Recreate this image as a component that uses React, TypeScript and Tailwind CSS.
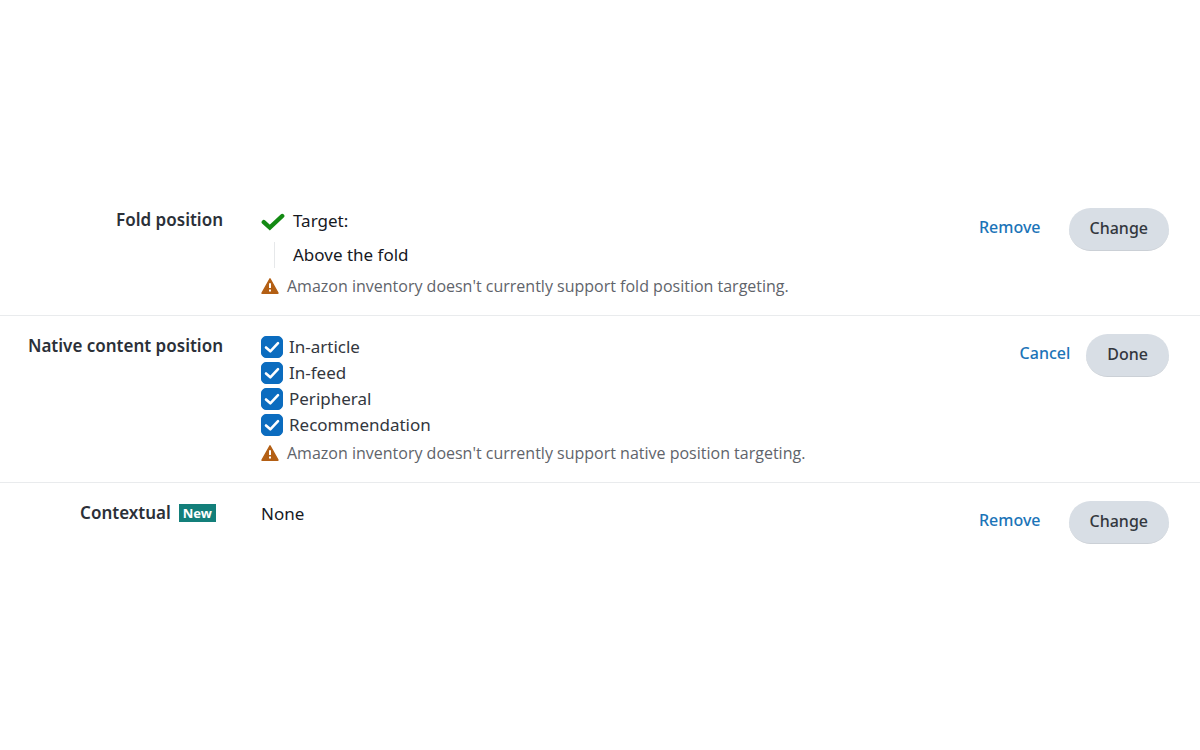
import React, { useState } from 'react';

const POSITIONS = ['In-article', 'In-feed', 'Peripheral', 'Recommendation'];

const CheckMark: React.FC = () => (
  <svg className="w-6 h-6 shrink-0" viewBox="0 0 24 24" fill="none" aria-hidden="true">
    <path d="M2.8 13.2 8.8 18.6 21.2 7" stroke="#138a13" strokeWidth="4.4" strokeLinecap="round" strokeLinejoin="miter" />
  </svg>
);

const Warning: React.FC<{ children: React.ReactNode }> = ({ children }) => (
  <p className="flex items-center gap-2 font-['Open_Sans',sans-serif] text-[16px] leading-6 font-medium text-[#5f646b]">
    <svg className="w-[18px] h-[18px] shrink-0" viewBox="0 0 18 18" aria-hidden="true">
      <path d="M9 1.8 17 16.2H1Z" fill="#b35f14" stroke="#b35f14" strokeWidth="1.4" strokeLinejoin="round" />
      <path d="M9 6.2v4.8" stroke="#fff" strokeWidth="2" />
      <path d="M9 12.6v2" stroke="#fff" strokeWidth="2" />
    </svg>
    <span>{children}</span>
  </p>
);

interface SettingRowProps {
  label: React.ReactNode;
  link: string;
  action: string;
  children: React.ReactNode;
  wideGap?: boolean;
  last?: boolean;
}

const SettingRow: React.FC<SettingRowProps> = ({ label, link, action, children, wideGap = true, last = false }) => (
  <section className={`flex items-start pt-[18px] pr-[31px] ${last ? '' : 'pb-[17px] border-b border-[#e9ebed]'}`}>
    <h3 className="w-[223px] shrink-0 flex justify-end items-center text-[17px] leading-6 font-semibold text-[#2b3038]">
      {label}
    </h3>
    <div className="flex-1 min-w-0 pl-[38px]">{children}</div>
    <div className={`flex items-start shrink-0 ${wideGap ? 'gap-7' : 'gap-4'}`}>
      <a href="#" className="pt-[7px] text-[16px] leading-6 font-medium text-[#1b74b8]">
        {link}
      </a>
      <button
        type="button"
        className="h-[43px] px-[21px] pb-0.5 rounded-full bg-[#d8dee5] text-[16px] leading-6 font-medium text-[#33373e] border-b border-[#cbd0d6]"
      >
        {action}
      </button>
    </div>
  </section>
);

export default function App() {
  const [selected, setSelected] = useState<string[]>(POSITIONS);

  const toggle = (name: string) => {
    setSelected(prev => (prev.includes(name) ? prev.filter(p => p !== name) : [...prev, name]));
  };

  return (
    <main className="min-h-screen bg-white pt-[190px] font-['Noto_Sans',sans-serif]">
      <SettingRow label="Fold position" link="Remove" action="Change">
        <div className="flex items-center gap-2 text-[17px] leading-[26px] text-[#16191f]">
          <CheckMark />
          <span>Target:</span>
        </div>
        {/* Selected values hang off a thin guide line */}
        <div className="mt-2 mb-1.5 ml-[13px] pl-[18px] border-l border-[#e6e8ea] text-[17px] leading-[26px] text-[#16191f]">
          Above the fold
        </div>
        <Warning>Amazon inventory doesn't currently support fold position targeting.</Warning>
      </SettingRow>

      <SettingRow label="Native content position" link="Cancel" action="Done" wideGap={false}>
        <div className="mb-[3px] flex flex-col items-start">
          {POSITIONS.map(name => (
            <label key={name} className="flex items-center gap-1.5 text-[17px] leading-[26px] text-[#33373e]">
              <span className="relative w-[22px] h-[22px]">
                <input
                  type="checkbox"
                  checked={selected.includes(name)}
                  onChange={() => toggle(name)}
                  className="peer block appearance-none w-[22px] h-[22px] rounded-[5px] border border-[#0b6cbf] bg-white checked:bg-[#0b6cbf]"
                />
                <svg
                  className="absolute inset-0 w-[22px] h-[22px] pointer-events-none hidden peer-checked:block"
                  viewBox="0 0 22 22"
                  fill="none"
                  aria-hidden="true"
                >
                  <path d="M5 11.5 9.3 15.3 17 7.2" stroke="#fff" strokeWidth="2.6" strokeLinecap="round" strokeLinejoin="round" />
                </svg>
              </span>
              {name}
            </label>
          ))}
        </div>
        <Warning>Amazon inventory doesn't currently support native position targeting.</Warning>
      </SettingRow>

      <SettingRow
        last
        label={
          <>
            Contextual
            <span className="ml-2 mr-[7px] px-1 bg-[#137f7a] text-[13px] leading-[18px] font-bold text-white">New</span>
          </>
        }
        link="Remove"
        action="Change"
      >
        <p className="text-[17px] leading-[26px] text-[#16191f]">None</p>
      </SettingRow>
    </main>
  );
}
